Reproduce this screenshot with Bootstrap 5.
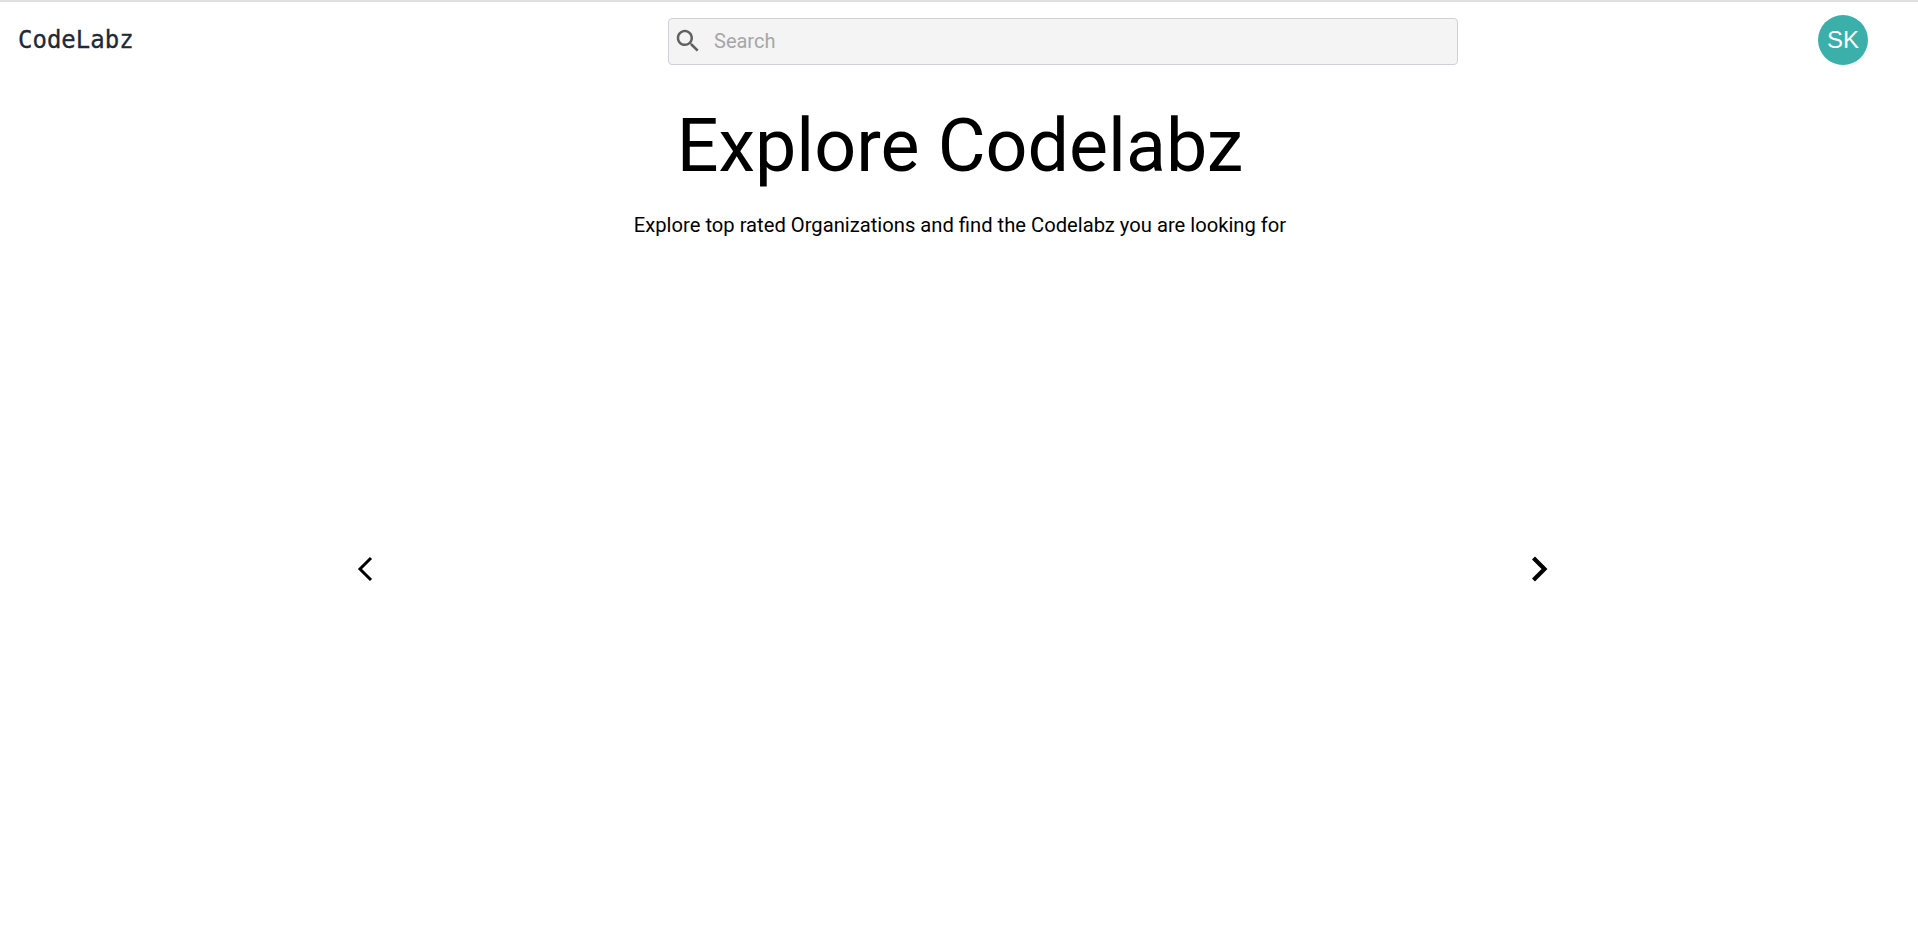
<!DOCTYPE html>
<html lang="en">
<head>
<meta charset="utf-8">
<title>CodeLabz</title>
<link href="https://cdn.jsdelivr.net/npm/bootstrap@5.3.0/dist/css/bootstrap.min.css" rel="stylesheet">
<style>
html, body { height: 100%; }
body { background: #fff; font-family: Roboto, sans-serif; overflow: hidden; }
.top-line { height: 2px; background: #e0e0e0; }
.app-bar { height: 76px; padding: 0 50px 0 18px; }
.brand-slot { flex: 0 0 650px; }
.brand-name { font-family: "DejaVu Sans Mono", monospace; font-size: 24px; color: #1f2937; text-decoration: none; -webkit-text-stroke: .3px #1f2937; }
.search-box { width: 790px; height: 47px; background: #f4f4f4; border: 1px solid #ced2d8; border-radius: 4px; padding-left: 4px; margin-top: 2px; }
.search-box svg { flex: none; }
.search-input { background: transparent; border: 0; outline: 0; font-family: Roboto, sans-serif; font-size: 20px; color: #333; padding: 0 0 0 11px; width: 100%; }
.search-input::placeholder { color: #a6a6a6; opacity: 1; }
.avatar-dot { width: 50px; height: 50px; border-radius: 50%; background: #3bb0aa; color: #fff; font-size: 24px; font-family: "Liberation Sans", sans-serif; }
.hero-title { font-family: Roboto, sans-serif; font-weight: 400; font-size: 73.6px; line-height: 86px; color: #000; margin: 0; }
.hero-sub { font-family: Roboto, sans-serif; font-size: 20.2px; line-height: 30px; color: #000; margin: 21px 0 0; }
.hero-block { width: 1920px; padding-top: 25px; }
.slider-row { padding: 0 359px 0 346px; height: 300px; margin-top: 179px; }
.slider-btn { background: none; border: 0; padding: 0; width: 40px; height: 40px; line-height: 0; }
</style>
</head>
<body>
<div class="top-line"></div>
<header class="app-bar d-flex align-items-center">
  <div class="brand-slot"><a class="brand-name" href="#">CodeLabz</a></div>
  <div class="search-box d-flex align-items-center">
    <svg width="30" height="30" viewBox="0 0 24 24" fill="#616161"><path d="M15.5 14h-.79l-.28-.27C15.41 12.59 16 11.11 16 9.5 16 5.91 13.09 3 9.5 3S3 5.91 3 9.5 5.91 16 9.5 16c1.61 0 3.09-.59 4.23-1.57l.27.28v.79l5 4.99L20.49 19l-4.99-5zm-6 0C7.01 14 5 11.99 5 9.5S7.01 5 9.5 5 14 7.01 14 9.5 11.99 14 9.5 14z"/></svg>
    <input class="search-input" type="text" placeholder="Search">
  </div>
  <div class="avatar-dot d-flex align-items-center justify-content-center ms-auto">SK</div>
</header>
<main>
  <div class="hero-block text-center">
    <h1 class="hero-title">Explore Codelabz</h1>
    <p class="hero-sub">Explore top rated Organizations and find the Codelabz you are looking for</p>
  </div>
  <div class="slider-row d-flex align-items-center justify-content-between">
    <button class="slider-btn" type="button" aria-label="Previous"><svg width="40" height="40" viewBox="0 0 40 40" fill="none" stroke="#000" stroke-width="3"><path d="M25 9 L14 20 L25 31"/></svg></button>
    <button class="slider-btn" type="button" aria-label="Next"><svg width="40" height="40" viewBox="0 0 40 40" fill="none" stroke="#000" stroke-width="4.200"><path d="M14.500 9 L25.500 20 L14.500 31"/></svg></button>
  </div>
</main>
<script src="https://cdn.jsdelivr.net/npm/bootstrap@5.3.0/dist/js/bootstrap.bundle.min.js"></script>
</body>
</html>
